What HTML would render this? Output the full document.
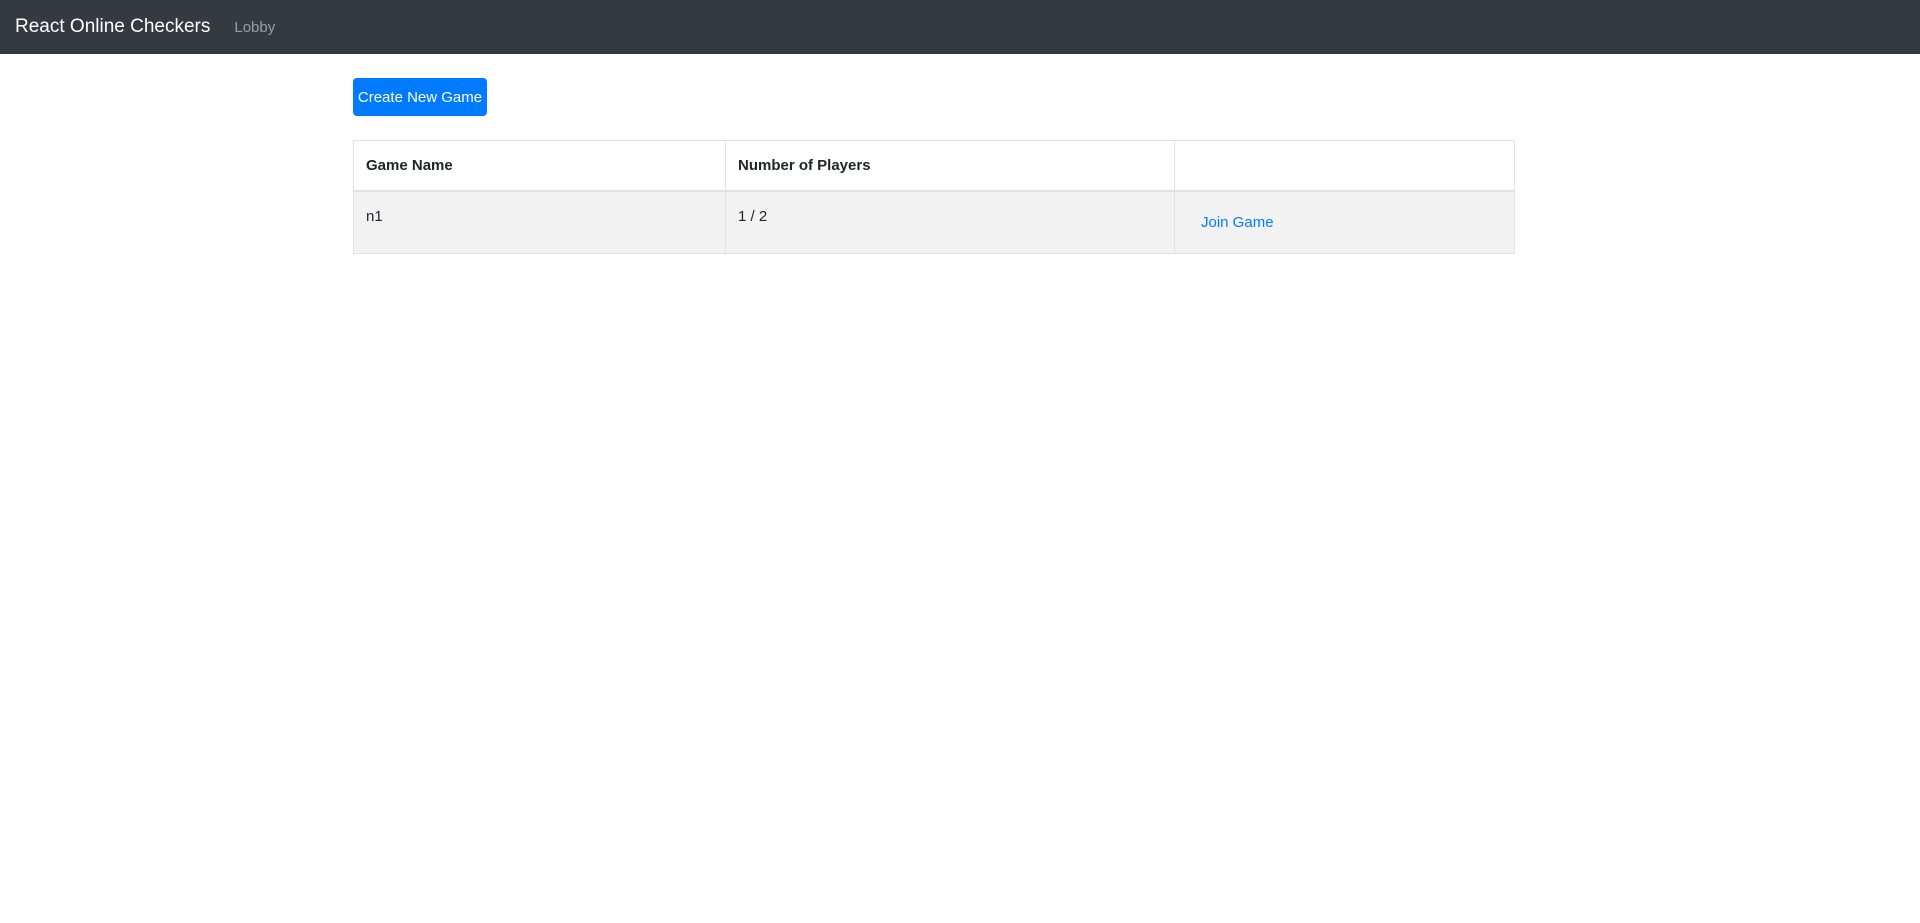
<!DOCTYPE html>
<html><head><meta charset="utf-8"><style>
*{box-sizing:border-box;margin:0;padding:0}
body{font-family:"Liberation Sans",sans-serif;font-size:15px;color:#212529;background:#fff;width:1920px;height:923px;overflow:hidden}
.nav{height:54px;background:#343a40;display:flex;align-items:center;padding-left:15px}
.brand{color:#fff;font-size:19px;margin-right:24px}
.link{color:rgba(255,255,255,.5);font-size:15px}
.btn{position:absolute;left:353px;top:78px;width:134px;height:38px;background:#007bff;color:#fff;border-radius:4px;display:flex;align-items:center;justify-content:center;font-size:15px}
table{position:absolute;left:353px;top:140px;width:1162px;border-collapse:collapse}
th,td{border:1px solid #dee2e6;text-align:left;vertical-align:top;padding:0 12px}
th{height:50px;vertical-align:middle;font-weight:bold;border-bottom:2px solid #dee2e6}
tbody tr{background:#f2f2f2}
td{height:63px;padding-top:16px}
a{color:#007bff;text-decoration:none}
</style></head><body>
<div class="nav"><span class="brand">React Online Checkers</span><span class="link">Lobby</span></div>
<div class="btn">Create New Game</div>
<table>
<thead><tr><th style="width:372px">Game Name</th><th style="width:449px">Number of Players</th><th></th></tr></thead>
<tbody><tr><td>n1</td><td>1 / 2</td><td style="padding-top:22px;padding-left:26px"><a>Join Game</a></td></tr></tbody>
</table>
</body></html>
